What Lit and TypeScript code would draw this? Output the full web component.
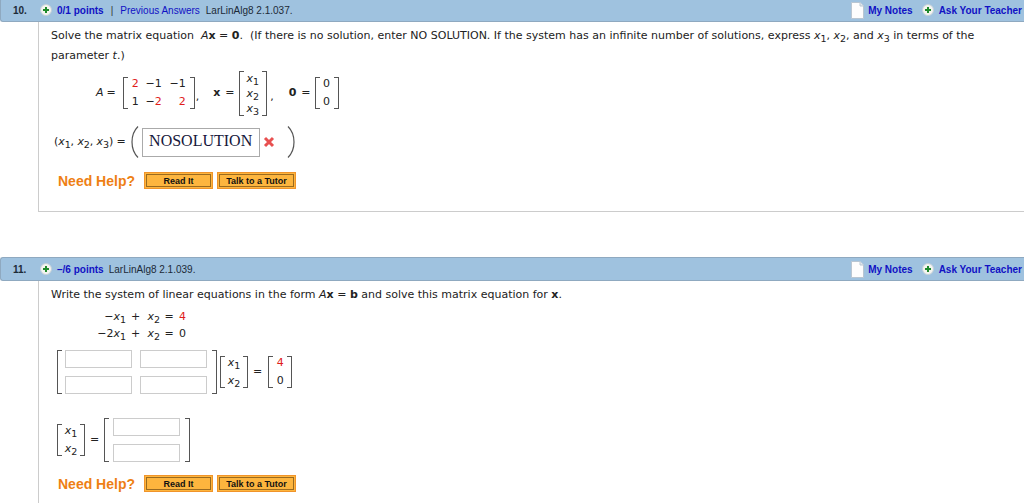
import { LitElement, html, css, svg } from 'lit';
import { customElement, property } from 'lit/decorators.js';

const plusIcon = html`<svg class="plus" width="12" height="12" viewBox="0 0 12 12">
  <circle cx="6" cy="6" r="5.500" fill="#f4f4f0" stroke="#c4d0d8" />
  <path d="M6 3v6M3 6h6" stroke="#1f8a2c" stroke-width="2" />
</svg>`;

const noteIcon = html`<svg class="note" width="13" height="17" viewBox="0 0 13 17">
  <path d="M.5.5h8.5l3.5 3.5v12.500H.5z" fill="#fdfdfd" stroke="#b9c6d2" />
  ${svg`<path d="M9 .5v3.500h3.500" fill="#e4e8ec" stroke="#b9c6d2" />`}
</svg>`;

const leftParen = html`<svg class="paren" width="8" height="32" viewBox="0 0 8 32">
  <path d="M7 .5C2.500 5 1 10 1 16s1.500 11 6 15.500" fill="none" stroke="#555" stroke-width="1.200" />
</svg>`;

const rightParen = html`<svg class="paren" width="8" height="32" viewBox="0 0 8 32">
  <path d="M1 .5C5.500 5 7 10 7 16s-1.500 11-6 15.500" fill="none" stroke="#555" stroke-width="1.200" />
</svg>`;

const x = (n?: number) => html`<span class="x"><i>x</i>${n ? html`<span class="sub">${n}</span>` : ''}</span>`;

@customElement('q-bracket')
export class QBracket extends LitElement {
  @property({ type: Number }) gap = 4;

  static styles = css`
    :host {
      display: inline-flex;
      align-items: stretch;
    }
    .side {
      width: 4px;
      border: 1px solid #555;
      flex: none;
    }
    .left {
      border-right: 0;
    }
    .right {
      border-left: 0;
    }
    .body {
      display: flex;
      align-items: center;
    }
  `;

  render() {
    return html`<div class="side left"></div>
      <div class="body" style="padding: 0 ${this.gap}px"><slot></slot></div>
      <div class="side right"></div>`;
  }
}

@customElement('q-header')
export class QHeader extends LitElement {
  @property() num = '';
  @property() points = '';
  @property({ type: Boolean }) answers = false;
  @property() code = '';

  static styles = css`
    :host {
      display: flex;
      align-items: center;
      height: 24px;
      box-sizing: border-box;
      padding: 0 2px 0 12px;
      background: #9fc2df;
      border: 1px solid #8fa9c0;
      border-right: 0;
      border-radius: 3px 0 0 3px;
      font: 10px 'Liberation Sans', Arial, sans-serif;
      color: #1c2a38;
    }
    .num {
      width: 27px;
      font-weight: bold;
    }
    .plus {
      margin-right: 5px;
    }
    .points {
      color: #1111c4;
      font-weight: bold;
    }
    .sep {
      margin: 0 7px 0 7px;
      color: #333;
    }
    .link {
      color: #1111c4;
      margin-right: 1px;
    }
    .code {
      margin-left: 5px;
    }
    .tools {
      margin-left: auto;
      display: flex;
      align-items: center;
      color: #1111c4;
      font-weight: bold;
    }
    .note {
      margin-right: 4px;
    }
    .teach {
      margin-left: 9px;
    }
  `;

  render() {
    return html`<span class="num">${this.num}</span>${plusIcon}
      <span class="points">${this.points}</span>
      ${this.answers
        ? html`<span class="sep">|</span><span class="link">Previous Answers</span>`
        : ''}
      <span class="code">${this.code}</span>
      <span class="tools">${noteIcon}<span>My Notes</span>
        <span class="teach"></span>${plusIcon}<span>Ask Your Teacher</span></span>`;
  }
}

@customElement('need-help')
export class NeedHelp extends LitElement {
  static styles = css`
    :host {
      display: flex;
      align-items: center;
      padding-left: 7px;
    }
    .label {
      width: 86px;
      font: bold 14px 'Liberation Sans', Arial, sans-serif;
      color: #ee7f14;
    }
    button {
      height: 17px;
      margin-right: 4px;
      padding: 0;
      border: 1px solid #f0942a;
      outline: 1px solid #9a6a20;
      outline-offset: -3px;
      background: #fdb53e;
      font: bold 9px 'Liberation Sans', Arial, sans-serif;
      color: #111;
    }
    .read {
      width: 69px;
    }
    .tutor {
      width: 79px;
    }
  `;

  render() {
    return html`<span class="label">Need Help?</span>
      <button class="read">Read It</button>
      <button class="tutor">Talk to a Tutor</button>`;
  }
}

@customElement('app-root')
export class AppRoot extends LitElement {
  static styles = css`
    :host {
      display: block;
      width: 1024px;
      height: 503px;
      overflow: hidden;
      background: #fff;
      font: 11px/20px 'DejaVu Sans', Verdana, sans-serif;
      color: #222;
    }
    .first {
      margin-top: -2px;
    }
    .body {
      margin-left: 38px;
      padding: 4px 0 0 12px;
      border-left: 1px solid #ccc;
    }
    .q1 {
      height: 190px;
      box-sizing: border-box;
      border-bottom: 1px solid #ccc;
      margin-bottom: 45px;
    }
    .q2 {
      height: 222px;
      box-sizing: border-box;
    }
    p {
      margin: 0;
      white-space: nowrap;
    }
    i {
      font-style: italic;
    }
    b {
      font-weight: bold;
    }
    .sub {
      font-size: 9.500px;
      position: relative;
      top: 3px;
    }
    .red {
      color: #e01b1b;
    }
    .math-row {
      display: flex;
      align-items: center;
      height: 46px;
      margin-top: 4px;
      padding-left: 45px;
    }
    .eq {
      margin: 0 7px 0 3px;
    }
    .eq-x {
      margin: 0 4px 0 5px;
    }
    .eq-tight {
      margin: 0 6px 0 5px;
    }
    .comma {
      margin: 7px 14px 0 1px;
    }
    .comma.second {
      margin: 7px 15px 0 3px;
    }
    .grid-a {
      display: grid;
      grid-template-columns: 6px 24px 24px;
      grid-auto-rows: 18px;
      text-align: right;
      line-height: 18px;
    }
    .short {
      height: 32px;
    }
    .col {
      display: grid;
      grid-auto-rows: 15px;
      line-height: 15px;
      text-align: center;
    }
    .col.two {
      grid-auto-rows: 18px;
      line-height: 18px;
      width: 12px;
    }
    .col.two.vars {
      width: 16px;
    }
    .answer {
      display: flex;
      align-items: center;
      height: 32px;
      margin-top: 10px;
      padding-left: 3px;
    }
    .tuple {
      letter-spacing: -0.100px;
      margin-right: 5px;
    }
    .nosol {
      width: 118px;
      height: 29px;
      box-sizing: border-box;
      margin: 0 3px;
      border: 1px solid #aaa;
      text-align: center;
      font: 16px/24px 'Liberation Serif', 'Times New Roman', serif;
      color: #16163a;
    }
    .wrong {
      margin-right: 12px;
    }
    .need1 {
      margin-top: 14px;
    }
    .equations {
      display: grid;
      grid-template-columns: 75px 19px 15px 18px 8px;
      grid-auto-rows: 17px;
      margin-top: 3px;
      line-height: 17px;
      text-align: right;
      width: 135px;
    }
    .equations > span:nth-child(5n + 2),
    .equations > span:nth-child(5n + 4) {
      text-align: center;
    }
    .matrix-row {
      display: flex;
      align-items: center;
      height: 46px;
      margin-top: 7px;
      padding-left: 6px;
    }
    .inputs {
      display: grid;
      grid-template-columns: 67px 67px;
      gap: 8px;
      padding-right: 2px;
    }
    .inputs.one {
      grid-template-columns: 67px;
      padding-right: 1px;
    }
    input {
      box-sizing: border-box;
      width: 67px;
      height: 18px;
      margin: 0;
      padding: 0;
      border: 1px solid #ccc;
      background: #fff;
      display: block;
    }
    .small {
      margin-left: 3px;
    }
    .eq2 {
      margin: 0 5px;
    }
    .solve-row {
      display: flex;
      align-items: center;
      height: 47px;
      margin-top: 21px;
      padding-left: 6px;
    }
    .need2 {
      margin-top: 12px;
    }
  `;

  render() {
    return html`
      <q-header class="first" num="10." points="0/1 points" answers code="LarLinAlg8 2.1.037."></q-header>
      <div class="body q1">
        <p>Solve the matrix equation &nbsp;<i>A</i><b>x</b> = <b>0</b>. &nbsp;(If there is no solution, enter NO SOLUTION. If the system has an infinite number of solutions, express ${x(1)}, ${x(2)}, and ${x(3)} in terms of the</p>
        <p>parameter <i>t</i>.)</p>
        <div class="math-row">
          <i>A</i><span class="eq">=</span>
          <q-bracket class="short" gap="4">
            <div class="grid-a">
              <span class="red">2</span><span>−1</span><span>−1</span>
              <span>1</span><span>−<span class="red">2</span></span><span class="red">2</span>
            </div>
          </q-bracket>
          <span class="comma">,</span>
          <b>x</b><span class="eq-x">=</span>
          <q-bracket gap="3">
            <div class="col">${x(1)}${x(2)}${x(3)}</div>
          </q-bracket>
          <span class="comma second">,</span>
          <b>0</b><span class="eq-x">=</span>
          <q-bracket class="short" gap="1">
            <div class="col two"><span>0</span><span>0</span></div>
          </q-bracket>
        </div>
        <div class="answer">
          <span class="tuple">(${x(1)}, ${x(2)}, ${x(3)}) =</span>
          ${leftParen}
          <div class="nosol">NOSOLUTION</div>
          <svg class="wrong" width="12" height="12" viewBox="0 0 12 12">
            <path d="M2 2l8 8M10 2l-8 8" stroke="#e85050" stroke-width="3" />
          </svg>
          ${rightParen}
        </div>
        <need-help class="need1"></need-help>
      </div>
      <q-header num="11." points="–/6 points" code="LarLinAlg8 2.1.039."></q-header>
      <div class="body q2">
        <p>Write the system of linear equations in the form <i>A</i><b>x</b> = <b>b</b> and solve this matrix equation for <b>x</b>.</p>
        <div class="equations">
          <span>−${x(1)}</span><span>+</span><span>${x(2)}</span><span>=</span><span class="red">4</span>
          <span>−2${x(1)}</span><span>+</span><span>${x(2)}</span><span>=</span><span>0</span>
        </div>
        <div class="matrix-row">
          <q-bracket gap="3">
            <div class="inputs">
              <input /><input />
              <input /><input />
            </div>
          </q-bracket>
          <q-bracket class="short small" gap="1">
            <div class="col two vars">${x(1)}${x(2)}</div>
          </q-bracket>
          <span class="eq-tight">=</span>
          <q-bracket class="short" gap="1">
            <div class="col two"><span class="red">4</span><span>0</span></div>
          </q-bracket>
        </div>
        <div class="solve-row">
          <q-bracket class="short" gap="1">
            <div class="col two vars">${x(1)}${x(2)}</div>
          </q-bracket>
          <span class="eq2">=</span>
          <q-bracket gap="4">
            <div class="inputs one"><input /><input /></div>
          </q-bracket>
        </div>
        <need-help class="need2"></need-help>
      </div>
    `;
  }
}
